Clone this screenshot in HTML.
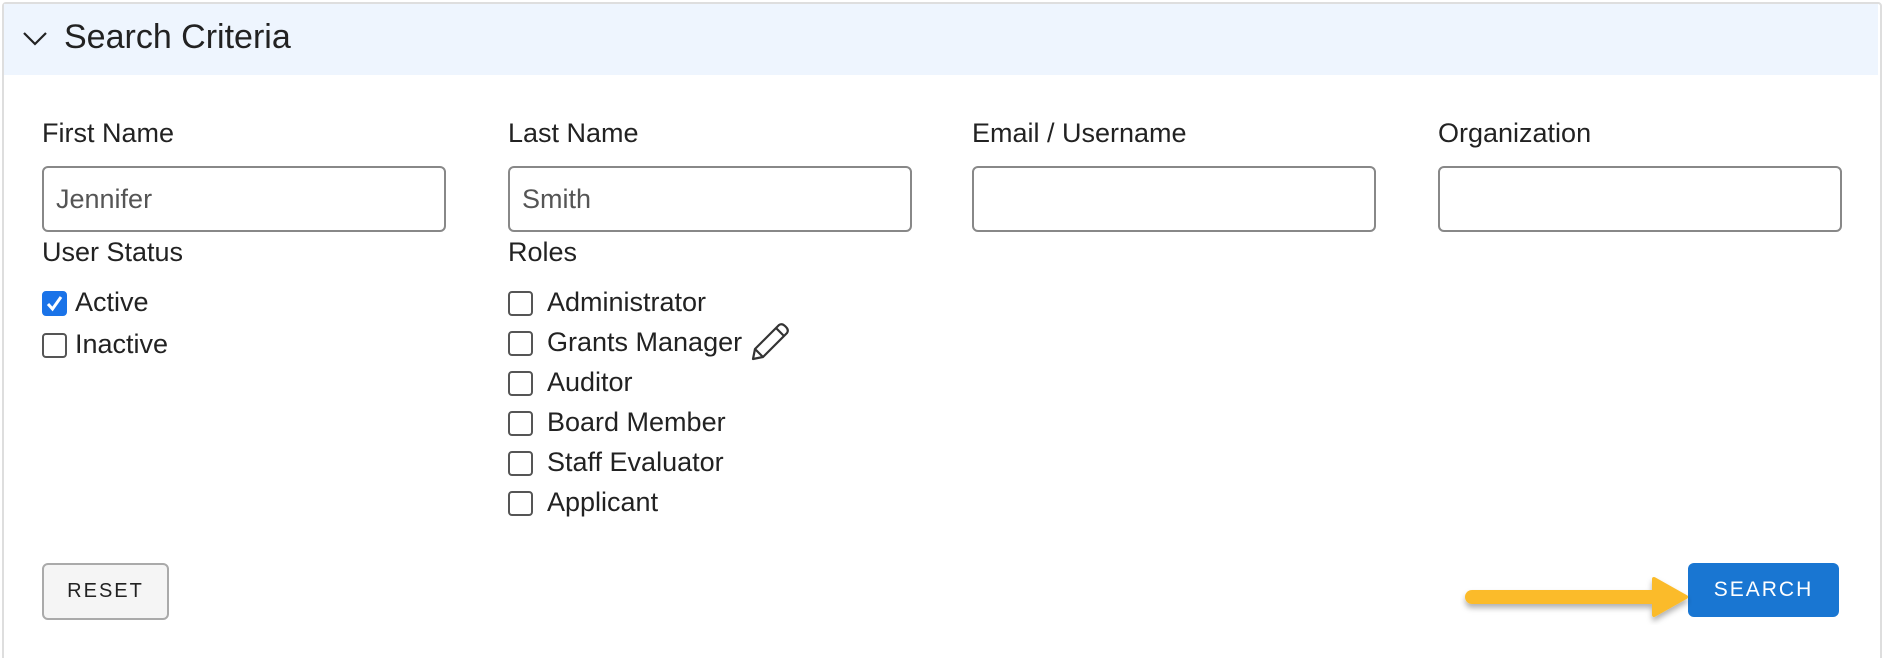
<!DOCTYPE html>
<html><head><style>
html,body{margin:0;width:1886px;height:658px;overflow:hidden}
body{background:#fff;font-family:"Liberation Sans",sans-serif;position:relative;color:#222}
.panel{position:absolute;left:2px;top:2px;width:1876px;height:680px;border:2px solid #dedede;border-radius:4px}
.hdr{position:absolute;left:4px;top:4px;width:1874px;height:71px;background:#eef5fe}
.abs{position:absolute}
.lbl{position:absolute;font-size:27px;color:#222}
.inp{position:absolute;top:166px;width:400px;height:62px;border:2px solid #888;border-radius:6px;box-sizing:content-box}
.inp span{position:absolute;left:12px;top:16px;font-size:27px;color:#555}
.cb{position:absolute;width:21px;height:21px;border:2px solid #555;border-radius:4px;background:#fff}
.cbt{position:absolute;font-size:27px;color:#222}
.btn{position:absolute;font-size:20px;letter-spacing:2px;display:flex;align-items:center;justify-content:center;border-radius:6px}
</style></head><body>
<div class="panel"></div>
<div class="hdr"></div>
<svg class="abs" style="left:22px;top:31px" width="26" height="16" viewBox="0 0 26 16"><path d="M2 2 L13 13 L24 2" fill="none" stroke="#222" stroke-width="2.2"/></svg>
<div class="abs" style="left:64px;top:18px;font-size:34px;color:#222">Search Criteria</div>

<div class="lbl" style="left:42px;top:118px">First Name</div>
<div class="lbl" style="left:508px;top:118px">Last Name</div>
<div class="lbl" style="left:972px;top:118px">Email / Username</div>
<div class="lbl" style="left:1438px;top:118px">Organization</div>

<div class="inp" style="left:42px"><span>Jennifer</span></div>
<div class="inp" style="left:508px"><span>Smith</span></div>
<div class="inp" style="left:972px"></div>
<div class="inp" style="left:1438px"></div>

<div class="lbl" style="left:42px;top:237px">User Status</div>
<div class="lbl" style="left:508px;top:237px">Roles</div>

<div class="cb" style="left:42px;top:291px;background:#1a73e8;border-color:#1a73e8"><svg width="21" height="21" viewBox="0 0 21 21" style="position:absolute;left:0;top:0"><path d="M4 11 L8.5 16 L17 4" fill="none" stroke="#fff" stroke-width="3"/></svg></div>
<div class="cbt" style="left:75px;top:287px">Active</div>
<div class="cb" style="left:42px;top:333px"></div>
<div class="cbt" style="left:75px;top:329px">Inactive</div>

<div class="cb" style="left:508px;top:291px"></div><div class="cbt" style="left:547px;top:287px">Administrator</div>
<div class="cb" style="left:508px;top:331px"></div><div class="cbt" style="left:547px;top:327px">Grants Manager</div>
<div class="cb" style="left:508px;top:371px"></div><div class="cbt" style="left:547px;top:367px">Auditor</div>
<div class="cb" style="left:508px;top:411px"></div><div class="cbt" style="left:547px;top:407px">Board Member</div>
<div class="cb" style="left:508px;top:451px"></div><div class="cbt" style="left:547px;top:447px">Staff Evaluator</div>
<div class="cb" style="left:508px;top:491px"></div><div class="cbt" style="left:547px;top:487px">Applicant</div>

<svg class="abs" style="left:749px;top:321px" width="42" height="42" viewBox="0 0 42 42"><path d="M4 38 L6 28 L30 4 Q33 2 36 5 L37 6 Q40 9 38 12 L14 36 Z M6 28 L14 36 M27 7 L35 15" fill="none" stroke="#333" stroke-width="2.2" stroke-linejoin="round"/></svg>

<div class="btn" style="left:42px;top:563px;width:123px;height:53px;border:2px solid #aaa;background:#f5f5f5;color:#222">RESET</div>
<div class="btn" style="left:1688px;top:563px;width:151px;height:54px;background:#1976d2;color:#fff;font-size:21px">SEARCH</div>

<svg class="abs" style="left:1460px;top:575px" width="232" height="50" viewBox="0 0 232 50">
<defs><filter id="s" x="-10%" y="-50%" width="120%" height="200%"><feDropShadow dx="0" dy="4" stdDeviation="3" flood-color="#000" flood-opacity="0.3"/></filter></defs>
<g filter="url(#s)"><path d="M12 22 L200 22" stroke="#fbbb2a" stroke-width="14" stroke-linecap="round"/><path d="M194 4 L226 22 L194 40 Z" fill="#fbbb2a" stroke="#fbbb2a" stroke-width="4" stroke-linejoin="round"/></g>
</svg>
</body></html>
